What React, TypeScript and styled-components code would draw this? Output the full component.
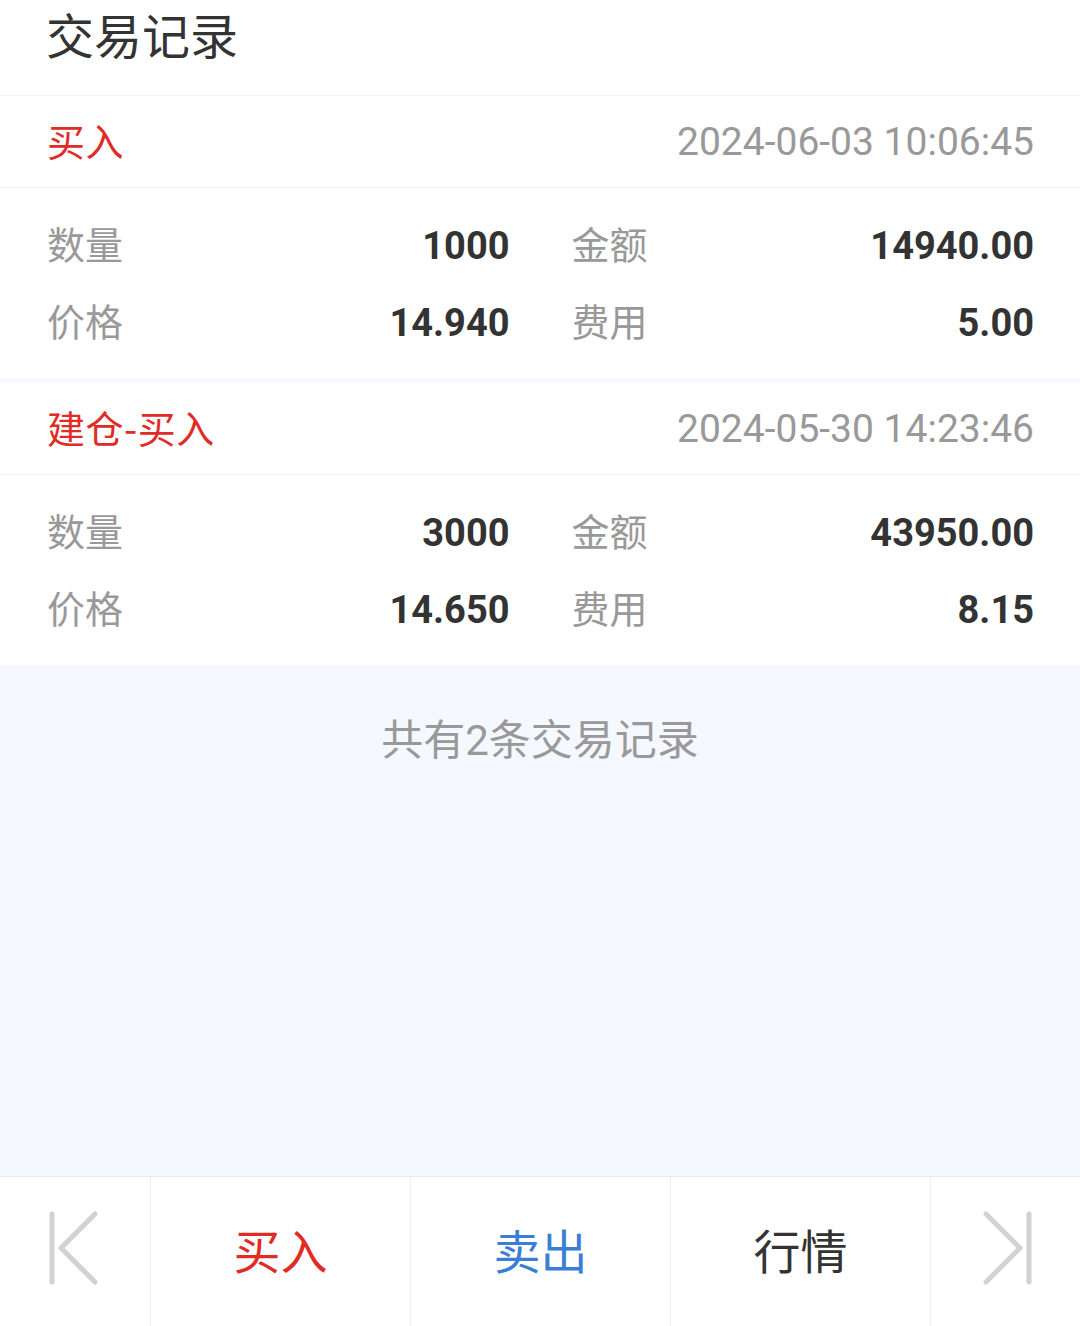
import React from "react";
import styled, { createGlobalStyle } from "styled-components";

const CJK = `"Noto Sans CJK SC", "Noto Sans", sans-serif`;

const Global = createGlobalStyle`
  html, body { margin: 0; padding: 0; background: #ffffff; }
  body {
    font-family: Roboto, "Noto Sans CJK SC", "Noto Sans", sans-serif;
    color: #333333;
  }
  * { box-sizing: border-box; }
`;

const Page = styled.div`
  width: 1080px;
  height: 1326px;
  display: flex;
  flex-direction: column;
  background: #f5f8fe;
  overflow: hidden;
`;

const Header = styled.div`
  height: 96px;
  flex: none;
  background: #ffffff;
  border-bottom: 1px solid #f3f3f3;
  padding: 9px 46px 0;
  font-family: ${CJK};
  font-size: 48px;
  line-height: 48px;
  color: #333333;
`;

const Card = styled.div`
  background: #ffffff;
  flex: none;
  & + & {
    margin-top: 5px;
  }
`;

const CardHead = styled.div`
  height: 92px;
  display: flex;
  align-items: center;
  justify-content: space-between;
  padding: 0 46px 0 47px;
  border-bottom: 1px solid #f3f3f3;
`;

const TradeType = styled.span`
  font-family: ${CJK};
  font-size: 38px;
  line-height: 48px;
  color: #e02b27;
  margin-top: -4px;
  letter-spacing: 0.5px;
`;

const TradeTime = styled.span`
  font-size: 39px;
  color: #999999;
`;

const CardBody = styled.div`
  display: grid;
  grid-template-columns: 1fr 1fr;
  column-gap: 62px;
  padding: 19px 46px 17px 47px;
`;

const Field = styled.div`
  height: 77px;
  display: flex;
  align-items: center;
  justify-content: space-between;
`;

const Label = styled.span`
  font-family: ${CJK};
  font-size: 38px;
  line-height: 48px;
  color: #999999;
  margin-top: -5px;
`;

const Value = styled.span`
  font-size: 38px;
  font-weight: 700;
  color: #333333;
`;

const Summary = styled.div`
  flex: 1;
  text-align: center;
  padding-top: 51px;
  font-size: 42px;
  line-height: 50px;
  color: #999999;
`;

const Toolbar = styled.div`
  height: 150px;
  flex: none;
  display: grid;
  grid-template-columns: 150px 260px 260px 260px 150px;
  background: #ffffff;
  border-top: 1px solid #eaeaea;
`;

const ToolButton = styled.div<{ $color?: string }>`
  display: flex;
  align-items: center;
  justify-content: center;
  font-family: ${CJK};
  font-size: 47px;
  padding-bottom: 6px;
  color: ${(p) => p.$color || "#333333"};
  & + & {
    border-left: 1px solid #eeeeee;
  }
`;

const NavIcon = styled.svg`
  width: 56px;
  height: 78px;
  margin-top: 1px;
`;

type Trade = {
  type: string;
  time: string;
  qty: string;
  amount: string;
  price: string;
  fee: string;
};

const trades: Trade[] = [
  {
    type: "买入",
    time: "2024-06-03 10:06:45",
    qty: "1000",
    amount: "14940.00",
    price: "14.940",
    fee: "5.00",
  },
  {
    type: "建仓-买入",
    time: "2024-05-30 14:23:46",
    qty: "3000",
    amount: "43950.00",
    price: "14.650",
    fee: "8.15",
  },
];

const FirstIcon = () => (
  <NavIcon viewBox="0 0 56 78" fill="none" stroke="#d2d2d2" strokeWidth="5" strokeLinecap="round" strokeLinejoin="round">
    <line x1="5" y1="4" x2="5" y2="72" />
    <polyline points="48,4 14,38 48,72" />
  </NavIcon>
);

const LastIcon = () => (
  <NavIcon viewBox="0 0 56 78" fill="none" stroke="#d2d2d2" strokeWidth="5" strokeLinecap="round" strokeLinejoin="round">
    <line x1="51" y1="4" x2="51" y2="72" />
    <polyline points="8,4 42,38 8,72" />
  </NavIcon>
);

export default function App() {
  return (
    <>
      <Global />
      <Page>
        <Header>交易记录</Header>
        {trades.map((t) => (
          <Card key={t.time}>
            <CardHead>
              <TradeType>{t.type}</TradeType>
              <TradeTime>{t.time}</TradeTime>
            </CardHead>
            <CardBody>
              <Field>
                <Label>数量</Label>
                <Value>{t.qty}</Value>
              </Field>
              <Field>
                <Label>金额</Label>
                <Value>{t.amount}</Value>
              </Field>
              <Field>
                <Label>价格</Label>
                <Value>{t.price}</Value>
              </Field>
              <Field>
                <Label>费用</Label>
                <Value>{t.fee}</Value>
              </Field>
            </CardBody>
          </Card>
        ))}
        <Summary>共有2条交易记录</Summary>
        <Toolbar>
          <ToolButton>
            <FirstIcon />
          </ToolButton>
          <ToolButton $color="#e02b27">买入</ToolButton>
          <ToolButton $color="#3a7fd5">卖出</ToolButton>
          <ToolButton>行情</ToolButton>
          <ToolButton>
            <LastIcon />
          </ToolButton>
        </Toolbar>
      </Page>
    </>
  );
}
